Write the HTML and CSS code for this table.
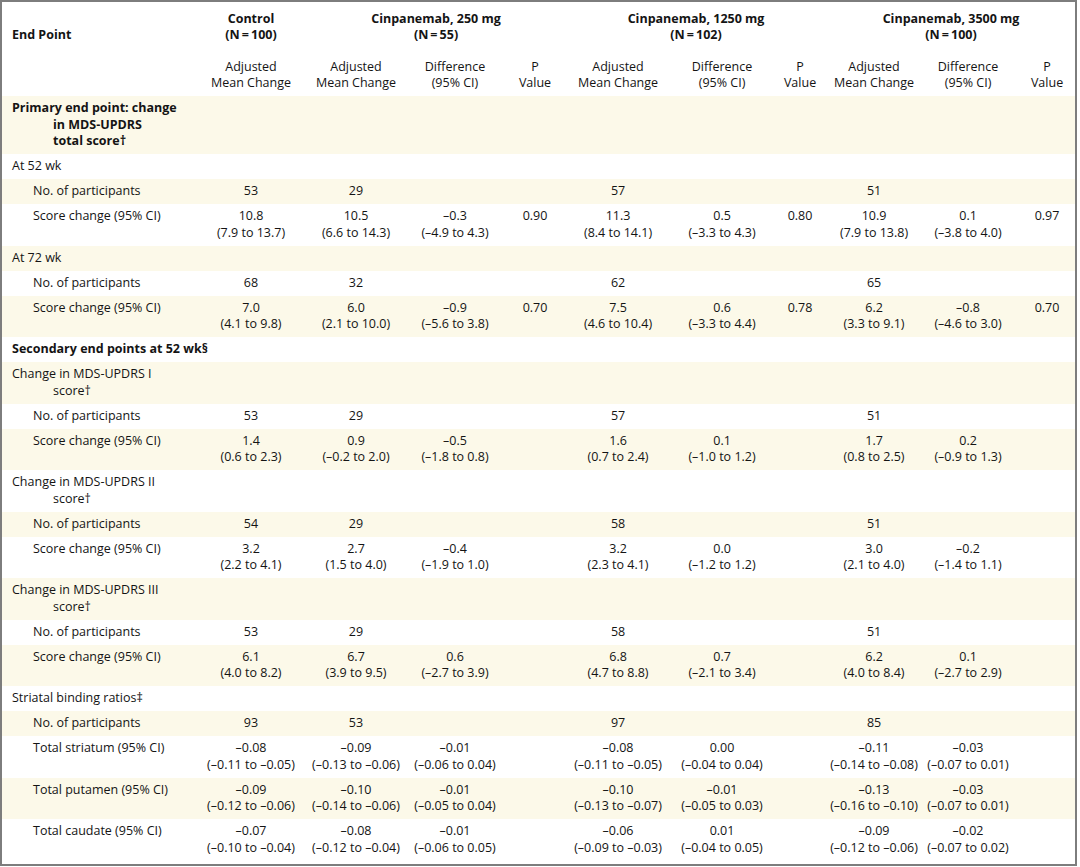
FILE: index.html
```html
<!DOCTYPE html>
<html lang="en">
<head>
<meta charset="utf-8">
<title>End Points</title>
<link rel="stylesheet" href="styles.css">
</head>
<body>
<div class="frame">
<table class="results">
<colgroup>
<col class="w-label"><col class="w-ctl"><col class="w-adj1"><col class="w-dif1"><col class="w-p1"><col class="w-adj2"><col class="w-dif2"><col class="w-p2"><col class="w-adj3"><col class="w-dif3"><col class="w-p3">
</colgroup>
<thead>
<tr class="h1">
<th class="lbl">End Point</th>
<th>Control<br>(N&#8201;=&#8201;100)</th>
<th colspan="3">Cinpanemab, 250 mg<br>(N&#8201;=&#8201;55)</th>
<th colspan="3">Cinpanemab, 1250 mg<br>(N&#8201;=&#8201;102)</th>
<th colspan="3" class="grp3">Cinpanemab, 3500 mg<br>(N&#8201;=&#8201;100)</th>
</tr>
<tr class="h2">
<th></th>
<th>Adjusted<br>Mean Change</th>
<th>Adjusted<br>Mean Change</th>
<th>Difference<br>(95% CI)</th>
<th>P<br>Value</th>
<th>Adjusted<br>Mean Change</th>
<th>Difference<br>(95% CI)</th>
<th>P<br>Value</th>
<th>Adjusted<br>Mean Change</th>
<th>Difference<br>(95% CI)</th>
<th class="plast">P<br>Value</th>
</tr>
</thead>
<tbody>
<tr><td class="lbl hang strong">Primary end point: change<br>in MDS-UPDRS<br>total score†</td><td></td><td></td><td></td><td></td><td></td><td></td><td></td><td></td><td></td><td></td></tr>
<tr><td class="lbl">At 52 wk</td><td></td><td></td><td></td><td></td><td></td><td></td><td></td><td></td><td></td><td></td></tr>
<tr><td class="sub">No. of participants</td><td>53</td><td>29</td><td></td><td></td><td>57</td><td></td><td></td><td>51</td><td></td><td class="plast"></td></tr>
<tr><td class="sub">Score change (95% CI)</td><td>10.8<br>(7.9 to 13.7)</td><td>10.5<br>(6.6 to 14.3)</td><td>–0.3<br>(–4.9 to 4.3)</td><td>0.90</td><td>11.3<br>(8.4 to 14.1)</td><td>0.5<br>(–3.3 to 4.3)</td><td>0.80</td><td>10.9<br>(7.9 to 13.8)</td><td>0.1<br>(–3.8 to 4.0)</td><td class="plast">0.97</td></tr>
<tr><td class="lbl">At 72 wk</td><td></td><td></td><td></td><td></td><td></td><td></td><td></td><td></td><td></td><td></td></tr>
<tr><td class="sub">No. of participants</td><td>68</td><td>32</td><td></td><td></td><td>62</td><td></td><td></td><td>65</td><td></td><td class="plast"></td></tr>
<tr><td class="sub">Score change (95% CI)</td><td>7.0<br>(4.1 to 9.8)</td><td>6.0<br>(2.1 to 10.0)</td><td>–0.9<br>(–5.6 to 3.8)</td><td>0.70</td><td>7.5<br>(4.6 to 10.4)</td><td>0.6<br>(–3.3 to 4.4)</td><td>0.78</td><td>6.2<br>(3.3 to 9.1)</td><td>–0.8<br>(–4.6 to 3.0)</td><td class="plast">0.70</td></tr>
<tr><td class="lbl strong">Secondary end points at 52 wk§</td><td></td><td></td><td></td><td></td><td></td><td></td><td></td><td></td><td></td><td></td></tr>
<tr><td class="lbl hang">Change in MDS-UPDRS I<br>score†</td><td></td><td></td><td></td><td></td><td></td><td></td><td></td><td></td><td></td><td></td></tr>
<tr><td class="sub">No. of participants</td><td>53</td><td>29</td><td></td><td></td><td>57</td><td></td><td></td><td>51</td><td></td><td class="plast"></td></tr>
<tr><td class="sub">Score change (95% CI)</td><td>1.4<br>(0.6 to 2.3)</td><td>0.9<br>(–0.2 to 2.0)</td><td>–0.5<br>(–1.8 to 0.8)</td><td></td><td>1.6<br>(0.7 to 2.4)</td><td>0.1<br>(–1.0 to 1.2)</td><td></td><td>1.7<br>(0.8 to 2.5)</td><td>0.2<br>(–0.9 to 1.3)</td><td class="plast"></td></tr>
<tr><td class="lbl hang">Change in MDS-UPDRS II<br>score†</td><td></td><td></td><td></td><td></td><td></td><td></td><td></td><td></td><td></td><td></td></tr>
<tr><td class="sub">No. of participants</td><td>54</td><td>29</td><td></td><td></td><td>58</td><td></td><td></td><td>51</td><td></td><td class="plast"></td></tr>
<tr><td class="sub">Score change (95% CI)</td><td>3.2<br>(2.2 to 4.1)</td><td>2.7<br>(1.5 to 4.0)</td><td>–0.4<br>(–1.9 to 1.0)</td><td></td><td>3.2<br>(2.3 to 4.1)</td><td>0.0<br>(–1.2 to 1.2)</td><td></td><td>3.0<br>(2.1 to 4.0)</td><td>–0.2<br>(–1.4 to 1.1)</td><td class="plast"></td></tr>
<tr><td class="lbl hang">Change in MDS-UPDRS III<br>score†</td><td></td><td></td><td></td><td></td><td></td><td></td><td></td><td></td><td></td><td></td></tr>
<tr><td class="sub">No. of participants</td><td>53</td><td>29</td><td></td><td></td><td>58</td><td></td><td></td><td>51</td><td></td><td class="plast"></td></tr>
<tr><td class="sub">Score change (95% CI)</td><td>6.1<br>(4.0 to 8.2)</td><td>6.7<br>(3.9 to 9.5)</td><td>0.6<br>(–2.7 to 3.9)</td><td></td><td>6.8<br>(4.7 to 8.8)</td><td>0.7<br>(–2.1 to 3.4)</td><td></td><td>6.2<br>(4.0 to 8.4)</td><td>0.1<br>(–2.7 to 2.9)</td><td class="plast"></td></tr>
<tr><td class="lbl">Striatal binding ratios‡</td><td></td><td></td><td></td><td></td><td></td><td></td><td></td><td></td><td></td><td></td></tr>
<tr><td class="sub">No. of participants</td><td>93</td><td>53</td><td></td><td></td><td>97</td><td></td><td></td><td>85</td><td></td><td class="plast"></td></tr>
<tr><td class="sub">Total striatum (95% CI)</td><td>–0.08<br>(–0.11 to –0.05)</td><td>–0.09<br>(–0.13 to –0.06)</td><td>–0.01<br>(–0.06 to 0.04)</td><td></td><td>–0.08<br>(–0.11 to –0.05)</td><td>0.00<br>(–0.04 to 0.04)</td><td></td><td>–0.11<br>(–0.14 to –0.08)</td><td>–0.03<br>(–0.07 to 0.01)</td><td class="plast"></td></tr>
<tr><td class="sub">Total putamen (95% CI)</td><td>–0.09<br>(–0.12 to –0.06)</td><td>–0.10<br>(–0.14 to –0.06)</td><td>–0.01<br>(–0.05 to 0.04)</td><td></td><td>–0.10<br>(–0.13 to –0.07)</td><td>–0.01<br>(–0.05 to 0.03)</td><td></td><td>–0.13<br>(–0.16 to –0.10)</td><td>–0.03<br>(–0.07 to 0.01)</td><td class="plast"></td></tr>
<tr class="last"><td class="sub">Total caudate (95% CI)</td><td>–0.07<br>(–0.10 to –0.04)</td><td>–0.08<br>(–0.12 to –0.04)</td><td>–0.01<br>(–0.06 to 0.05)</td><td></td><td>–0.06<br>(–0.09 to –0.03)</td><td>0.01<br>(–0.04 to 0.05)</td><td></td><td>–0.09<br>(–0.12 to –0.06)</td><td>–0.02<br>(–0.07 to 0.02)</td><td class="plast"></td></tr>
</tbody>
</table>
</div>
</body>
</html>
```
FILE: styles.css
```css
html, body {
  margin: 0;
  padding: 0;
  background: #ffffff;
}

.frame {
  width: 1077px;
  height: 866px;
  box-sizing: border-box;
  border: 2px solid #7d7d7d;
  background: #ffffff;
  overflow: hidden;
}

.results {
  table-layout: fixed;
  border-collapse: collapse;
  border-spacing: 0;
  width: 1073px;
  font-family: "Open Sans", "Noto Sans", sans-serif;
  font-size: 12.5px;
  line-height: 16.5px;
  color: #141414;
}

.w-label { width: 197px; }
.w-ctl { width: 104px; }
.w-adj1 { width: 106px; }
.w-dif1 { width: 92px; }
.w-p1 { width: 68px; }
.w-adj2 { width: 98px; }
.w-dif2 { width: 110px; }
.w-p2 { width: 46px; }
.w-adj3 { width: 102px; }
.w-dif3 { width: 86px; }
.w-p3 { width: 64px; }

.results th,
.results td {
  padding: 4px 0 4.5px;
  text-align: center;
  vertical-align: top;
  white-space: nowrap;
  overflow: visible;
}

.results th {
  font-weight: normal;
}

.results thead .h1 th {
  font-weight: bold;
  vertical-align: bottom;
  padding-top: 9px;
  padding-bottom: 6px;
  line-height: 16px;
}

.results thead .h2 th {
  padding-top: 10px;
  padding-bottom: 5px;
  line-height: 16px;
}

.results thead .h1 th.lbl {
  text-align: left;
}

.results tbody tr:nth-child(odd) {
  background: #fcf9e9;
}

.results td.lbl {
  text-align: left;
  padding-left: 10px;
}

.results td.sub {
  text-align: left;
  padding-left: 31px;
}

.results .lbl.hang {
  padding-left: 51px;
  text-indent: -41px;
}

.results th.lbl {
  padding-left: 10px;
}

.results .strong {
  font-weight: bold;
}

.results .plast {
  padding-left: 8px;
}

.results .grp3 {
  padding-left: 4px;
}
```
